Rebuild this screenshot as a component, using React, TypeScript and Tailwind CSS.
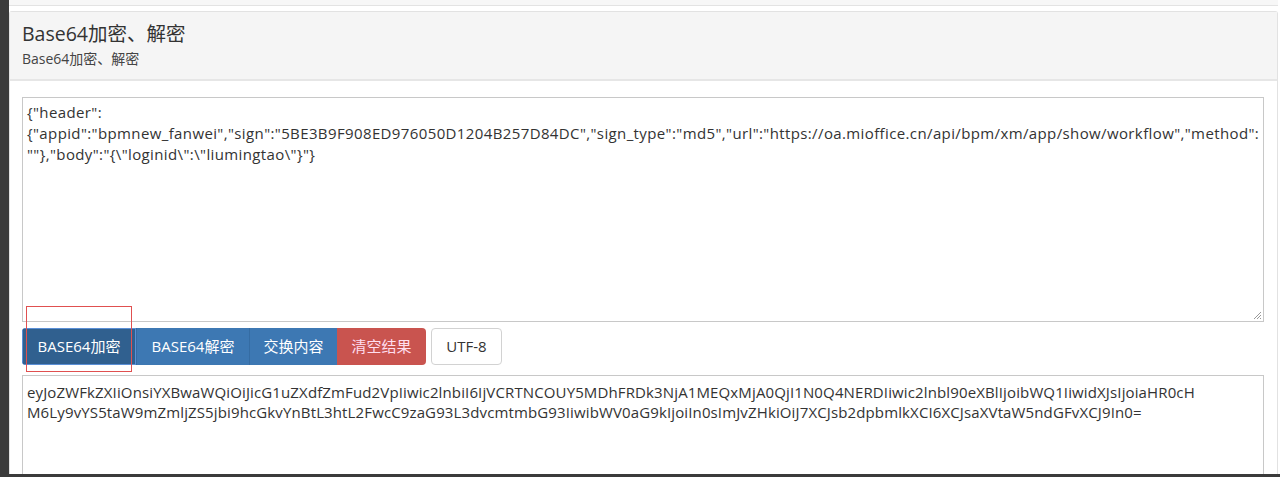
import React from "react";

const font = { fontFamily: '"Open Sans", "Noto Sans CJK SC", sans-serif' };

const inputLines = [
  '{"header":',
  '{"appid":"bpmnew_fanwei","sign":"5BE3B9F908ED976050D1204B257D84DC","sign_type":"md5","url":"https://oa.mioffice.cn/api/bpm/xm/app/show/workflow","method":',
  '""},"body":"{\\"loginid\\":\\"liumingtao\\"}"}',
];

const outputLines = [
  "eyJoZWFkZXIiOnsiYXBwaWQiOiJicG1uZXdfZmFud2VpIiwic2lnbiI6IjVCRTNCOUY5MDhFRDk3NjA1MEQxMjA0QjI1N0Q4NERDIiwic2lnbl90eXBlIjoibWQ1IiwidXJsIjoiaHR0cH",
  "M6Ly9vYS5taW9mZmljZS5jbi9hcGkvYnBtL3htL2FwcC9zaG93L3dvcmtmbG93IiwibWV0aG9kIjoiIn0sImJvZHkiOiJ7XCJsb2dpbmlkXCI6XCJsaXVtaW5ndGFvXCJ9In0=",
];

export default function App() {
  return (
    <div className="relative w-[1280px] h-[477px] overflow-hidden bg-white text-[#333]" style={font}>
      <div className="flex h-full">
        {/* dark strip on the left */}
        <div className="w-[9px] shrink-0 bg-[#3b3b3b]" />
        <div className="flex-1 flex flex-col min-h-0">
          {/* tail of previous panel */}
          <div className="h-[6px] shrink-0 bg-[#f7f7f7] border-b border-[#e3e3e3] mr-[2px]" />
          <div className="h-[5px] shrink-0" />
          <div className="shrink-0 border-l border-t border-r border-[#e2e2e2] rounded-t-[3px] mr-[2px] flex flex-col">
            <div className="shrink-0 bg-[#f5f5f5] border-b-2 border-[#e6e6e6] px-[12px] pt-[9px] h-[69px]">
              <h3 className="text-[19.5px] leading-[26px]">Base64加密、解密</h3>
              <p className="text-[14px] leading-[18px] mt-[3px] text-[#444]">Base64加密、解密</p>
            </div>
            <div className="px-[12px] pt-[16px] flex flex-col">
              <div className="relative w-[1242px] h-[225px] shrink-0 border border-[#c8c8c8] px-[4px] pt-[4px] text-[15px] tracking-[0.38px] leading-[21px] whitespace-pre overflow-hidden">
                {inputLines.map((l, i) => (
                  <div key={i}>{l}</div>
                ))}
                <svg className="absolute right-[1px] bottom-[1px]" width="10" height="10" viewBox="0 0 10 10">
                  <path d="M9 2 L2 9 M9 5 L5 9 M9 8 L8 9" stroke="#999" strokeWidth="1" />
                </svg>
              </div>
              <div className="flex items-center mt-[6px] h-[37px] shrink-0">
                <div className="flex h-[37px] rounded-[4px] overflow-hidden text-white text-[15px]">
                  <button className="w-[114px] bg-[#30608f] shadow-[inset_0_0_0_1px_#5a8fd6]">BASE64加密</button>
                  <button className="w-[113px] bg-[#3d78b3] border-l border-[#356ca3]">BASE64解密</button>
                  <button className="w-[88px] bg-[#3d78b3] border-l border-[#356ca3]">交换内容</button>
                  <button className="w-[89px] bg-[#c9544f] text-[#fde]">清空结果</button>
                </div>
                <button className="ml-[5px] h-[37px] w-[71px] border border-[#d2d2d2] rounded-[4px] bg-white text-[15px]">UTF-8</button>
              </div>
              <div className="w-[1242px] h-[110px] shrink-0 mt-[10px] border border-[#c8c8c8] px-[4px] pt-[6px] text-[15px] tracking-[0.13px] leading-[20px] whitespace-pre overflow-hidden">
                {outputLines.map((l, i) => (
                  <div key={i}>{l}</div>
                ))}
              </div>
            </div>
          </div>
        </div>
      </div>
      {/* red annotation box */}
      <div className="absolute left-[26px] top-[306px] w-[106px] h-[66px] border border-[#e05050]" />
      {/* dark bar at the bottom */}
      <div className="absolute left-0 right-0 bottom-0 h-[3px] bg-[#3b3b3b]" />
    </div>
  );
}
